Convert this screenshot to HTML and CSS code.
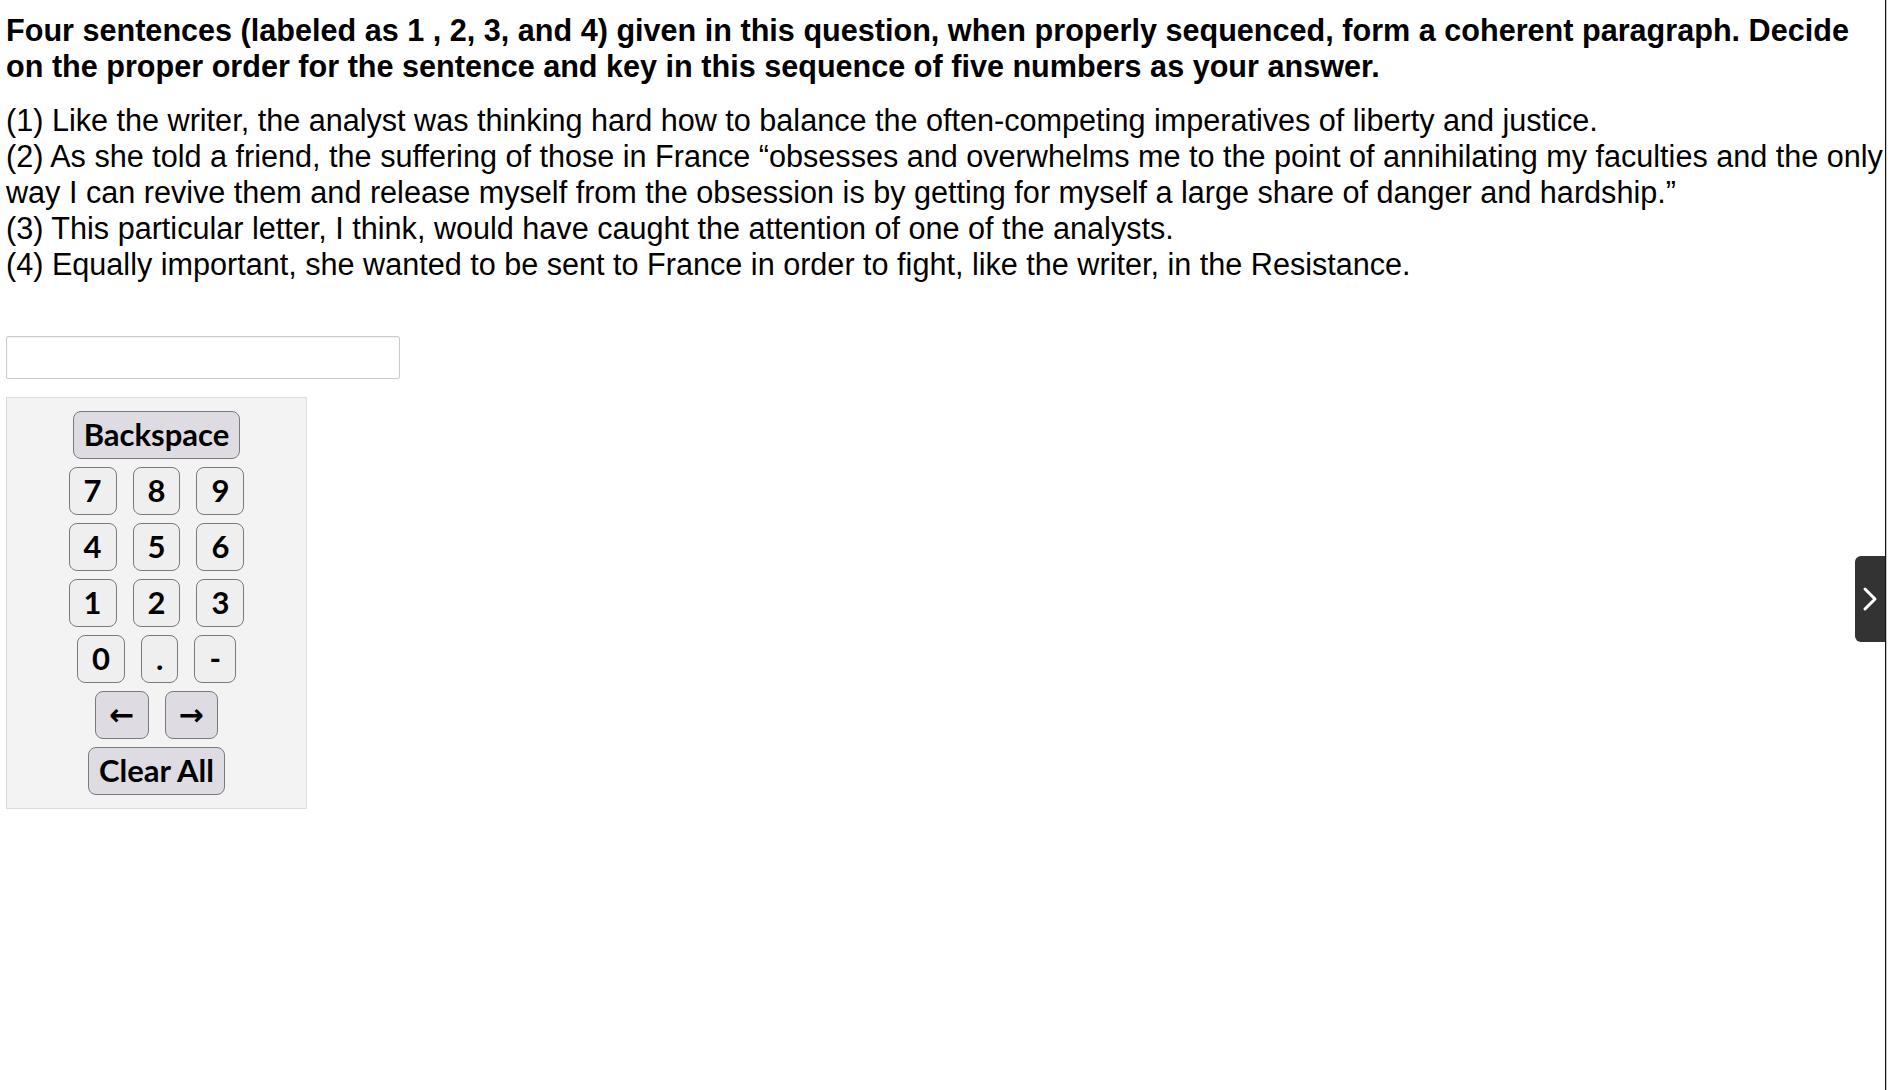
FILE: index.html
```html
<!DOCTYPE html>
<html lang="en">
<head>
<meta charset="utf-8">
<title>Sentence ordering</title>
<link rel="stylesheet" href="styles.css">
</head>
<body>
<div class="page">
  <div class="content">
    <p class="prompt">Four sentences (labeled as 1 , 2, 3, and 4) given in this question, when properly sequenced, form a coherent paragraph. Decide on the proper order for the sentence and key in this sequence of five numbers as your answer.</p>
    <div class="sentences">
      <div>(1) Like the writer, the analyst was thinking hard how to balance the often-competing imperatives of liberty and justice.</div>
      <div>(2) As she told a friend, the suffering of those in France “obsesses and overwhelms me to the point of annihilating my faculties and the only way I can revive them and release myself from the obsession is by getting for myself a large share of danger and hardship.”</div>
      <div>(3) This particular letter, I think, would have caught the attention of one of the analysts.</div>
      <div>(4) Equally important, she wanted to be sent to France in order to fight, like the writer, in the Resistance.</div>
    </div>
    <input class="answer" type="text" aria-label="Answer">
    <div class="keypad">
      <div class="krow"><button class="key key-alt">Backspace</button></div>
      <div class="krow"><button class="key">7</button><button class="key">8</button><button class="key">9</button></div>
      <div class="krow"><button class="key">4</button><button class="key">5</button><button class="key">6</button></div>
      <div class="krow"><button class="key">1</button><button class="key">2</button><button class="key">3</button></div>
      <div class="krow"><button class="key">0</button><button class="key">.</button><button class="key">-</button></div>
      <div class="krow"><button class="key key-alt key-arrow">←</button><button class="key key-alt key-arrow">→</button></div>
      <div class="krow"><button class="key key-alt">Clear All</button></div>
    </div>
  </div>
  <button class="side-tab" aria-label="Next">
    <svg width="16" height="26" viewBox="0 0 16 26"><polyline points="3,3 13,13 3,23" fill="none" stroke="#fff" stroke-width="3" stroke-linecap="round" stroke-linejoin="round"/></svg>
  </button>
</div>
</body>
</html>
```

FILE: styles.css
```css
html, body {
  margin: 0;
  padding: 0;
  background: #fff;
}

.page {
  position: relative;
  width: 1885px;
  height: 1090px;
  border-right: 1px solid #111;
  box-shadow: 1px 0 0 #c8c8c8;
  font-family: "Liberation Sans", Arial, sans-serif;
  color: #000;
}

.content {
  padding: 12px 0 0 6px;
}

.prompt {
  margin: 0;
  font-size: 30.6px;
  line-height: 36px;
  font-weight: bold;
}

.sentences {
  margin-top: 18px;
  font-size: 30.6px;
  line-height: 36px;
}

.answer {
  display: block;
  box-sizing: border-box;
  margin: 54px 0 0 0;
  width: 394px;
  height: 43px;
  border: 1px solid #cbcbcb;
  border-radius: 2px;
  box-shadow: inset 0 1px 2px rgba(0, 0, 0, 0.06);
  background: #fff;
  padding: 0 8px;
  font-size: 22px;
}

.keypad {
  box-sizing: border-box;
  width: 301px;
  margin-top: 18px;
  padding: 13px 0 13px;
  background: #f3f3f3;
  border: 1px solid #dcdcdc;
  display: flex;
  flex-direction: column;
  gap: 8px;
}

.krow {
  display: flex;
  justify-content: center;
  gap: 16px;
}

.key {
  box-sizing: border-box;
  height: 48px;
  padding: 0 14px 2px;
  border: 1px solid #7a7a7a;
  border-radius: 8px;
  background: #efefef;
  font-family: Lato, "Noto Sans", sans-serif;
  font-weight: bold;
  font-size: 31px;
  line-height: 44px;
  color: #000;
}

.key-alt {
  background: #dedbe2;
  padding: 0 10px 2px;
}

.key-arrow {
  font-family: "DejaVu Sans", sans-serif;
  font-weight: bold;
  font-size: 30px;
  padding: 0 13px;
}

.side-tab {
  position: absolute;
  top: 556px;
  right: 0;
  width: 30px;
  height: 86px;
  padding: 0;
  border: none;
  border-radius: 6px 0 0 6px;
  background: #333;
  display: flex;
  align-items: center;
  justify-content: center;
}
```
